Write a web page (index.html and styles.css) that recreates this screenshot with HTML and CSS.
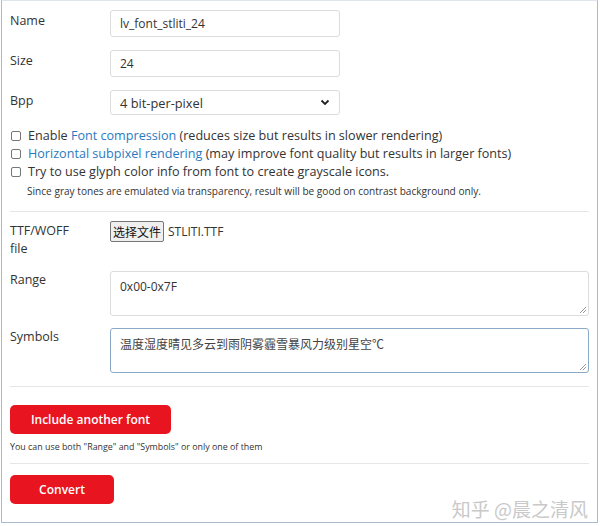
FILE: index.html
```html
<!DOCTYPE html>
<html lang="en">
<head>
  <meta charset="UTF-8">
  <title>Font converter</title>
  <link rel="stylesheet" href="styles.css">
</head>
<body>

<div class="panel">
  <div class="row">
    <label class="lbl">Name</label>
    <input class="field short" type="text" value="lv_font_stliti_24">
  </div>
  <div class="row">
    <label class="lbl">Size</label>
    <input class="field short" type="text" value="24">
  </div>
  <div class="row">
    <label class="lbl">Bpp</label>
    <div class="select short">
      <span>4 bit-per-pixel</span>
      <svg width="10" height="7" viewBox="0 0 10 7"><path d="M1.5 1.5 L5 5 L8.5 1.5" fill="none" stroke="#222" stroke-width="1.8"/></svg>
    </div>
  </div>

  <div class="checks">
    <div class="check"><span class="box"></span>Enable <a>Font compression</a> (reduces size but results in slower rendering)</div>
    <div class="check"><span class="box"></span><a>Horizontal subpixel rendering</a> (may improve font quality but results in larger fonts)</div>
    <div class="check"><span class="box"></span>Try to use glyph color info from font to create grayscale icons.</div>
    <div class="hint indent">Since gray tones are emulated via transparency, result will be good on contrast background only.</div>
  </div>

  <hr class="first">

  <div class="row file-row">
    <label class="lbl">TTF/WOFF<br>file</label>
    <div class="file"><span class="file-btn">选择文件</span>STLITI.TTF</div>
  </div>
  <div class="row tight">
    <label class="lbl lbl-area">Range</label>
    <div class="area">0x00-0x7F
      <svg class="grip" width="8" height="8" viewBox="0 0 8 8"><path d="M7 1 L1 7 M7 4 L4 7" stroke="#999" stroke-width="1"/></svg>
    </div>
  </div>
  <div class="row">
    <label class="lbl lbl-area">Symbols</label>
    <div class="area focus">温度湿度晴见多云到雨阴雾霾雪暴风力级别星空℃
      <svg class="grip" width="8" height="8" viewBox="0 0 8 8"><path d="M7 1 L1 7 M7 4 L4 7" stroke="#999" stroke-width="1"/></svg>
    </div>
  </div>

  <hr>

  <button class="red wide">Include another font</button>
  <div class="hint small">You can use both "Range" and "Symbols" or only one of them</div>

  <hr class="last">

  <button class="red">Convert</button>

  <div class="watermark">知乎 @晨之清风</div>
</div>

</body>
</html>
```

FILE: styles.css
```css
body {
  margin: 0;
  font-family: "Open Sans", "Noto Sans CJK SC", sans-serif;
  color: #333;
  font-size: 12px;
  background: #fff;
}
.panel {
  position: relative;
  margin-left: 1px;
  width: 597px;
  height: 523px;
  border: 1px solid #a9bccf;
  border-top-color: #dde5ee;
  padding: 9px 8px 0 8px;
  box-sizing: border-box;
}
.row {
  display: flex;
  align-items: flex-start;
  margin-bottom: 13px;
}
.lbl {
  width: 100px;
  flex: none;
  padding-top: 2px;
  line-height: 18px;
  font-size: 12.5px;
}
.lbl-area {
  padding-top: 0;
}
.field, .select {
  height: 27px;
  box-sizing: border-box;
  border: 1px solid #dcdcdc;
  border-radius: 3px;
  padding: 0 9px;
  font-family: inherit;
  font-size: 12px;
  color: #333;
}
.short {
  width: 230px;
}
.select {
  height: 25px;
  display: flex;
  align-items: center;
  justify-content: space-between;
  font-size: 12.8px;
}
.checks {
  margin-top: -1px;
  font-size: 12.6px;
}
.check {
  height: 18px;
  line-height: 18px;
  white-space: nowrap;
}
.box {
  display: inline-block;
  vertical-align: -1px;
  width: 8px;
  height: 8px;
  border: 1px solid #777;
  border-radius: 2px;
  margin: 0 7px 0 1px;
}
.check a {
  color: #2a7ac0;
}
.hint {
  font-size: 10.1px;
  color: #333;
  margin-top: 3px;
}
.small {
  font-size: 8.9px;
  margin-top: 6px;
}
.indent {
  padding-left: 17px;
}
hr {
  border: none;
  border-top: 1px solid #e6e6e6;
  margin: 12px 0 13px 0;
}
hr.first {
  margin: 13px 0 8px 0;
}
.file-row {
  margin-bottom: 13px;
}
.tight {
  margin-bottom: 12px;
}
.file {
  display: flex;
  align-items: center;
  padding-top: 1px;
}
.file-btn {
  font-family: "Noto Sans CJK SC", sans-serif;
  font-size: 12px;
  color: #111;
  background: #efefef;
  border: 1px solid #767676;
  border-radius: 2px;
  padding: 0 2px;
  line-height: 19px;
  margin-right: 4px;
}
.area {
  position: relative;
  flex: 1;
  height: 45px;
  box-sizing: border-box;
  border: 1px solid #dcdcdc;
  border-radius: 3px;
  padding: 6px 9px;
}
.grip {
  position: absolute;
  right: 1px;
  bottom: 1px;
}
.focus {
  border-color: #8aa9c8;
  font-family: "Noto Sans CJK SC", sans-serif;
  font-size: 12px;
  color: #444;
}
.red {
  display: block;
  background: #e8141f;
  color: #fff;
  border: none;
  border-radius: 5px;
  font-family: inherit;
  font-weight: 600;
  font-size: 12px;
  height: 29px;
  width: 104px;
}
.wide {
  width: 161px;
  margin-top: 18px;
}
.last {
  margin: 10px 0 11px 0;
}
.watermark {
  position: absolute;
  right: 9px;
  bottom: 0;
  font-family: "Noto Sans CJK SC", sans-serif;
  font-size: 19px;
  color: #c9c9c9;
}
```
